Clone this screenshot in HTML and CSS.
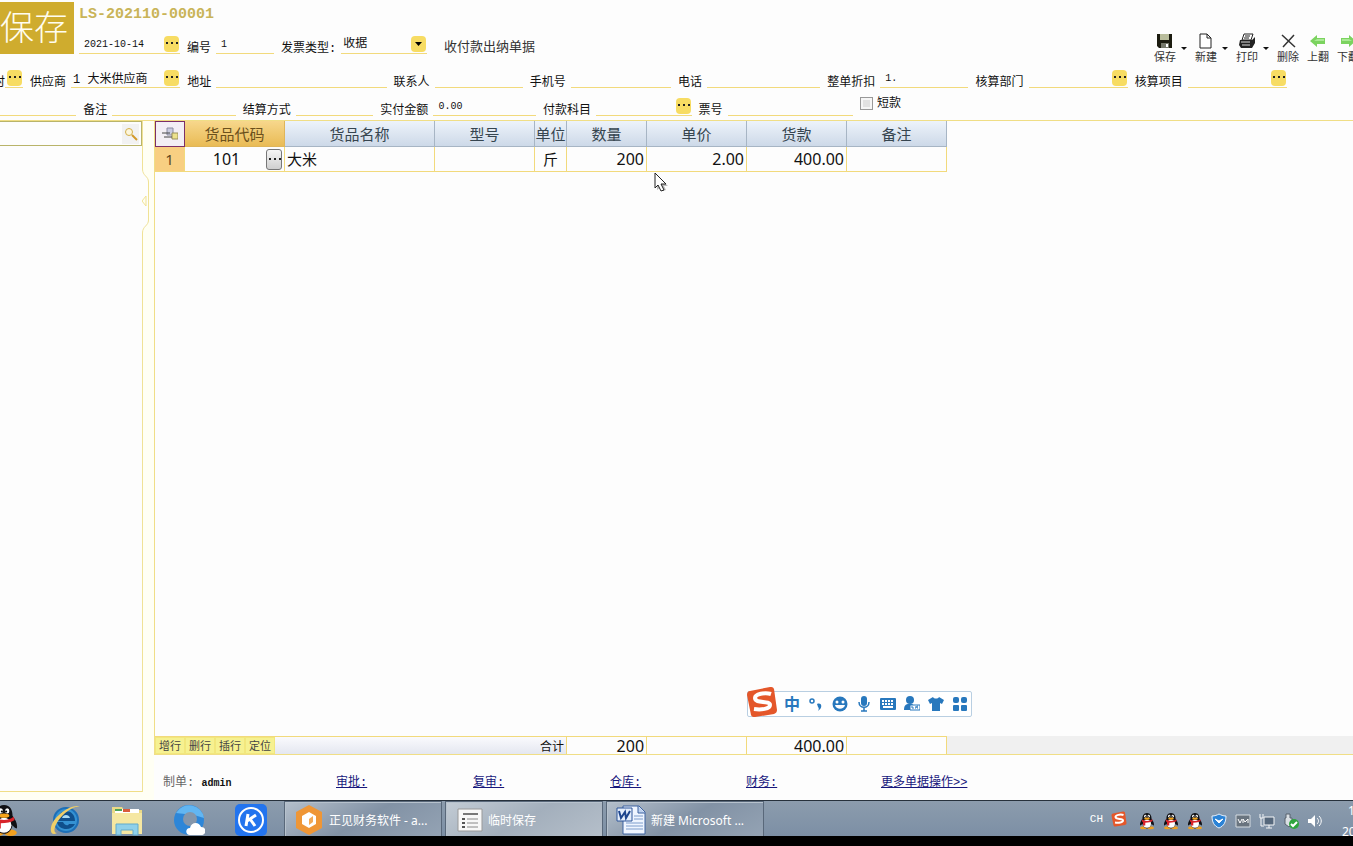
FILE: index.html
```html
<!DOCTYPE html>
<html lang="zh-CN">
<head>
    <meta charset="UTF-8">
    <meta name="viewport" content="width=device-width, initial-scale=1.0">
    <title>正见财务软件</title>
    <link rel="stylesheet" href="styles.css">
</head>
<body>
    <!-- shared shapes -->
    <svg class="defs" aria-hidden="true">
        <symbol id="more" viewBox="0 0 13 3">
            <path d="M1 0h2v2H1zM6 0h2v2H6zM11 0h2v2h-2z" fill="#222"/>
        </symbol>
        <symbol id="penguin" viewBox="0 0 28 30">
            <ellipse cx="8" cy="27" rx="6" ry="3" fill="#f0a020"/>
            <ellipse cx="20" cy="27" rx="6" ry="3" fill="#f0a020"/>
            <path d="M14 1C8 1 6 6 6 11c-3 4-5 8-4 12 2 0 3-2 4-3 1 5 4 8 8 8s7-3 8-8c1 1 2 3 4 3 1-4-1-8-4-12 0-5-2-10-8-10z" fill="#101014"/>
            <ellipse cx="14" cy="20" rx="7" ry="7" fill="#fff"/>
            <ellipse cx="11" cy="6.500" rx="2" ry="2.500" fill="#fff"/>
            <ellipse cx="17" cy="6.500" rx="2" ry="2.500" fill="#fff"/>
            <circle cx="12" cy="7" r="1"/><circle cx="16" cy="7" r="1"/>
            <ellipse cx="14" cy="11" rx="5" ry="2" fill="#f5a31a"/>
            <path d="M5 12c5 4 13 4 18 0l1 3c-3 2-8 3-13 3v5H7v-6c-2-1-2-2-2-5z" fill="#d8232a"/>
        </symbol>
        <symbol id="sogou" viewBox="0 0 32 32">
            <path d="M4 5 24 1c2 0 3 0 4 2l3 21c0 2-1 3-3 4L9 31c-2 0-3 0-4-2L1 9c0-2 1-4 3-4z" fill="#e4572a"/>
            <path d="M25 8c-6-2-16 0-16 4 0 6 15 2 15 7 0 4-9 5-16 4" fill="none" stroke="#fff" stroke-width="4"/>
        </symbol>
    </svg>

    <header class="bill-head">
        <div class="head-top">
            <button class="save-big" type="button">保存</button>
            <div class="head-main">
                <h1 class="bill-no">LS-202110-00001</h1>
                <div class="row row-date">
                    <div class="picker">
                        <input type="text" value="2021-10-14" aria-label="日期">
                        <button class="dots" type="button" aria-label="选择日期"><svg width="13" height="3"><use href="#more"/></svg></button>
                    </div>
                    <div class="field">
                        <label for="code">编号</label>
                        <div class="picker"><input id="code" type="text" value="1"></div>
                    </div>
                    <div class="field">
                        <label for="invoice">发票类型:</label>
                        <div class="picker">
                            <select id="invoice"><option>收据</option></select>
                            <span class="dots"><svg width="7" height="4" viewBox="0 0 7 4"><path d="M0 0h7L3.500 4z"/></svg></span>
                        </div>
                    </div>
                    <span class="bill-kind">收付款出纳单据</span>
                </div>
            </div>
            <nav class="toolbar">
                <div class="split">
                    <button class="tool" type="button">
                        <svg width="18" height="18" viewBox="0 0 18 18"><path d="M1 2h15v14H3l-2-2z" fill="#1c1c10"/><path d="M4 2h9v6H4z" fill="#b9bd9c"/><path d="M5 11h8v5H5z" fill="#75786a"/><path d="M10 12h2v3h-2z" fill="#fff"/></svg>
                        <span>保存</span>
                    </button>
                    <span class="caret"></span>
                </div>
                <div class="split">
                    <button class="tool" type="button">
                        <svg width="18" height="18" viewBox="0 0 18 18"><path d="M3 2h7l4 4v10H3zM10 2v4h4" fill="#fff" stroke="#222" stroke-width="1"/></svg>
                        <span>新建</span>
                    </button>
                    <span class="caret"></span>
                </div>
                <div class="split">
                    <button class="tool" type="button">
                        <svg width="18" height="18" viewBox="0 0 18 18"><path d="M6 2h9l-2 6H4z" fill="#fff" stroke="#222"/><path d="M7 4h5M6 6h5" stroke="#222"/><path d="M2 8h12l3-3v6l-3 5H3l-2-3z" fill="#222"/><path d="M3 10h9M4 13h8" stroke="#ddd"/></svg>
                        <span>打印</span>
                    </button>
                    <span class="caret"></span>
                </div>
                <button class="tool" type="button">
                    <svg width="18" height="18" viewBox="0 0 18 18"><path d="M3 3l13 12M15 3L4 15" fill="none" stroke="#333" stroke-width="1.500"/></svg>
                    <span>删除</span>
                </button>
                <button class="tool" type="button">
                    <svg width="18" height="18" viewBox="0 0 18 18"><path d="M1 9l7-6v3h8v6H8v3z" fill="#7bd35f"/><path d="M8 7h7v2H5z" fill="#a9e994"/></svg>
                    <span>上翻</span>
                </button>
                <button class="tool" type="button">
                    <svg width="18" height="18" viewBox="0 0 18 18"><path d="M17 9l-7-6v3H2v6h8v3z" fill="#7bd35f"/><path d="M3 7h7l3 2H3z" fill="#a9e994"/></svg>
                    <span>下翻</span>
                </button>
            </nav>
        </div>

        <div class="row row-supplier">
            <div class="field cut">
                <label for="time">时</label>
                <div class="picker"><input id="time" type="text"><button class="dots" type="button" aria-label="选择时间"><svg width="13" height="3"><use href="#more"/></svg></button></div>
            </div>
            <div class="field">
                <label for="supplier">供应商</label>
                <div class="picker"><input id="supplier" class="cn" type="text" value="1 大米供应商"><button class="dots" type="button" aria-label="选择供应商"><svg width="13" height="3"><use href="#more"/></svg></button></div>
            </div>
            <div class="field">
                <label for="address">地址</label>
                <div class="picker"><input id="address" type="text"></div>
            </div>
            <div class="field">
                <label for="contact">联系人</label>
                <div class="picker"><input id="contact" type="text"></div>
            </div>
            <div class="field">
                <label for="mobile">手机号</label>
                <div class="picker"><input id="mobile" type="text"></div>
            </div>
            <div class="field">
                <label for="phone">电话</label>
                <div class="picker"><input id="phone" type="text"></div>
            </div>
            <div class="field">
                <label for="discount">整单折扣</label>
                <div class="picker"><input id="discount" type="text" value="1."></div>
            </div>
            <div class="field">
                <label for="dept">核算部门</label>
                <div class="picker"><input id="dept" type="text"><button class="dots" type="button" aria-label="选择部门"><svg width="13" height="3"><use href="#more"/></svg></button></div>
            </div>
            <div class="field">
                <label for="project">核算项目</label>
                <div class="picker"><input id="project" type="text"><button class="dots" type="button" aria-label="选择项目"><svg width="13" height="3"><use href="#more"/></svg></button></div>
            </div>
        </div>

        <div class="row row-pay">
            <div class="picker"><input type="text" aria-label="其他"></div>
            <div class="field">
                <label for="remark">备注</label>
                <div class="picker"><input id="remark" type="text"></div>
            </div>
            <div class="field">
                <label for="settle">结算方式</label>
                <div class="picker"><input id="settle" type="text"></div>
            </div>
            <div class="field">
                <label for="paid">实付金额</label>
                <div class="picker"><input id="paid" type="text" value="0.00"></div>
            </div>
            <div class="field">
                <label for="subject">付款科目</label>
                <div class="picker"><input id="subject" type="text"><button class="dots" type="button" aria-label="选择科目"><svg width="13" height="3"><use href="#more"/></svg></button></div>
            </div>
            <div class="field">
                <label for="ticket">票号</label>
                <div class="picker"><input id="ticket" type="text"></div>
            </div>
            <label class="check"><input type="checkbox">短款</label>
        </div>
    </header>

    <main class="work">
        <aside class="side">
            <div class="search">
                <input type="text" aria-label="搜索">
                <button type="button" aria-label="查找">
                    <svg width="14" height="14" viewBox="0 0 14 14"><circle cx="5" cy="5" r="3.500" fill="#fdf6dc" stroke="#d3b04a"/><path d="M8 8l5 5" stroke="#d39a2a" stroke-width="2"/></svg>
                </button>
            </div>
        </aside>
        <div class="splitter">
            <div class="line line-top"></div>
            <svg width="12" height="64" viewBox="0 0 12 64"><path d="M0 0h1c0 7 6 7 6 13v38c0 6-6 6-6 13H0z" fill="#fdfdfd"/><path d="M.5 0c0 7 6 7 6 13v38c0 6-6 6-6 13" fill="none" stroke="#f0e296"/><path d="M4 27l-4 5 4 5z" fill="#fffef0" stroke="#f0e296"/></svg>
            <div class="line line-bottom"></div>
        </div>
        <section class="content">
            <div class="sheet">
                <table class="grid">
                    <colgroup>
                        <col class="w-no"><col class="w-std"><col class="w-name"><col class="w-std"><col class="w-unit"><col class="w-qty"><col class="w-std"><col class="w-std"><col class="w-std">
                    </colgroup>
                    <thead>
                        <tr>
                            <th class="corner"><svg width="16" height="14" viewBox="0 0 16 14"><path d="M5 1h6v7H5z" fill="#c9cbe0" stroke="#8a8ca0"/><path d="M10 6h6v6h-6z" fill="#ece28c" stroke="#99905a"/><path d="M0 6h8M2 10h8" stroke="#444"/></svg></th>
                            <th class="active">货品代码</th>
                            <th>货品名称</th>
                            <th>型号</th>
                            <th>单位</th>
                            <th>数量</th>
                            <th>单价</th>
                            <th>货款</th>
                            <th>备注</th>
                        </tr>
                    </thead>
                    <tbody>
                        <tr>
                            <td class="row-no">1</td>
                            <td><div class="code-cell"><span>101</span><button type="button" aria-label="选择货品"><svg width="13" height="3"><use href="#more"/></svg></button></div></td>
                            <td class="text">大米</td>
                            <td></td>
                            <td class="text unit">斤</td>
                            <td class="num">200</td>
                            <td class="num">2.00</td>
                            <td class="num">400.00</td>
                            <td></td>
                        </tr>
                    </tbody>
                </table>
            </div>
            <div class="total">
                <table class="grid">
                    <colgroup>
                        <col class="w-no"><col class="w-std"><col class="w-name"><col class="w-std"><col class="w-unit"><col class="w-qty"><col class="w-std"><col class="w-std"><col class="w-std">
                    </colgroup>
                    <tbody>
                        <tr>
                            <td class="ops" colspan="5">
                                <div class="ops-row">
                                    <button type="button">增行</button>
                                    <button type="button">删行</button>
                                    <button type="button">插行</button>
                                    <button type="button">定位</button>
                                    <span>合计</span>
                                </div>
                            </td>
                            <td class="num">200</td>
                            <td></td>
                            <td class="num">400.00</td>
                            <td></td>
                        </tr>
                    </tbody>
                </table>
            </div>
            <div class="sign">
                <span class="maker">制单: <b>admin</b></span>
                <a href="#">审批:</a>
                <a href="#">复审:</a>
                <a href="#">仓库:</a>
                <a href="#">财务:</a>
                <a href="#">更多单据操作&gt;&gt;</a>
            </div>
        </section>
    </main>

    <footer class="taskbar">
        <div class="launch">
            <svg width="30" height="32" viewBox="0 0 28 30"><use href="#penguin"/></svg>
            <svg width="32" height="32" viewBox="0 0 32 32"><circle cx="17" cy="16" r="13" fill="#1c6fb8"/><circle cx="17" cy="16" r="11" fill="#3592d3"/><path d="M8 17h18c0-13-17-13-18 0zM26 20c-4 8-17 6-18-2h6c2 4 5 4 6 2z" fill="#0f4f8c"/><path d="M13 14h8c-1-4-7-4-8 0z" fill="#a9dcf5"/><path d="M31 3C25-1 8 9 3 20c-3 8 0 12 5 9-4 0-3-6 1-12C15 8 26 1 31 3z" fill="#efce68"/></svg>
            <svg width="32" height="32" viewBox="0 0 32 32"><path d="M1 3h10l2 3h18v24H1z" fill="#ead987"/><path d="M4 5h24v6H4z" fill="#fff"/><path d="M12 5h7v3h-7z" fill="#d95b3c"/><path d="M4 5h7v2H4z" fill="#4da355"/><path d="M1 9h30v21H1z" fill="#f5e7a2"/><path d="M5 20h22v11h-5v-5H10v5H5z" fill="#8fd0ea" stroke="#62aacb"/></svg>
            <svg width="32" height="32" viewBox="0 0 32 32"><circle cx="16" cy="16" r="15" fill="#2d86d8"/><path d="M3 9A15 15 0 0 1 31 14L21 11z" fill="#62b6f2"/><circle cx="17" cy="15" r="7" fill="#8496ab"/><path d="M17 31c-5 0-5-7 0-7 1-6 9-7 11-1 6 0 6 8 0 8z" fill="#fff"/></svg>
            <svg width="32" height="32" viewBox="0 0 32 32"><rect width="32" height="32" rx="5" fill="#2374ee"/><circle cx="16" cy="16" r="12" fill="none" stroke="#fff" stroke-width="2"/><path d="M13 10l-2 12M21 11l-9 6M15 15l5 7" fill="none" stroke="#fff" stroke-width="3"/></svg>
        </div>
        <div class="tasks">
            <button class="task" type="button">
                <svg width="30" height="30" viewBox="0 0 30 30"><path d="M15 0l13 7v16l-13 7L2 23V7z" fill="#ef9636"/><path d="M15 7l7 4v8l-7 4-7-4v-8z" fill="#fff"/><path d="M15 14l4-3v6l-4 3z" fill="#f2aa58"/></svg>
                <span>正见财务软件 - a...</span>
            </button>
            <button class="task current" type="button">
                <svg width="26" height="26" viewBox="0 0 26 26"><path d="M1 2h24v22H1z" fill="#f7f7f7" stroke="#999"/><path d="M6 7h15" stroke="#777" stroke-width="2"/><path d="M10 12h11M10 16h11M10 20h11" stroke="#888"/><path d="M5 12h3M5 16h3M5 20h3" stroke="#555" stroke-width="2"/></svg>
                <span>临时保存</span>
            </button>
            <button class="task" type="button">
                <svg width="30" height="30" viewBox="0 0 30 30"><path d="M7 1h16l6 6v22H7z" fill="#eff5ff" stroke="#3d62a0"/><path d="M22 1v7h7" fill="#bcd0ee" stroke="#3d62a0"/><path d="M18 11h9M18 14h9M10 18h17M10 21h17M10 24h17" stroke="#7d9ccb"/><path d="M1 3h15v13H1z" fill="#e3edfb" stroke="#2c5499"/><path d="M3 6l2 7 4-6 1 6 4-7" fill="none" stroke="#1d458e" stroke-width="2"/></svg>
                <span>新建 Microsoft ...</span>
            </button>
        </div>
        <div class="tray">
            <span class="lang">CH</span>
            <svg class="raised" width="16" height="16" viewBox="0 0 32 32"><use href="#sogou"/></svg>
            <svg width="16" height="18" viewBox="0 0 28 30"><use href="#penguin"/></svg>
            <svg width="16" height="18" viewBox="0 0 28 30"><use href="#penguin"/></svg>
            <svg width="16" height="18" viewBox="0 0 28 30"><use href="#penguin"/></svg>
            <svg width="16" height="16" viewBox="0 0 16 16"><path d="M1 3c3 0 5-1 7-2 2 1 4 2 7 2 0 6-2 10-7 12C3 13 1 9 1 3z" fill="#2b83d6" stroke="#e8f3ff"/><path d="M4 6l4 4 4-4-4 2z" fill="#fff" stroke="#fff"/></svg>
            <svg width="16" height="16" viewBox="0 0 16 16"><path d="M1 2h14v12H1z" fill="#69747f" stroke="#d5dbe1"/><path d="M3 6l2 4 2-4M8 10V6l2 3 3-3v4" fill="none" stroke="#fff"/></svg>
            <svg width="16" height="16" viewBox="0 0 16 16"><path d="M5 4h10v8H5zM7 15h6M10 12v3" fill="#56687c" stroke="#f4f6f8"/><path d="M1 1v4h3V1M2 5v8h3" fill="none" stroke="#f4f6f8"/></svg>
            <svg width="16" height="16" viewBox="0 0 16 16"><path d="M3 1h4v4h2v6l-3 3-4-3V5h1z" fill="#d9dee3" stroke="#58636e"/><circle cx="11" cy="11" r="5" fill="#2fa53d"/><path d="M8 11l2 2 4-4" fill="none" stroke="#fff" stroke-width="2"/></svg>
            <svg width="16" height="16" viewBox="0 0 16 16"><path d="M1 6h3l4-4v12l-4-4H1z" fill="#fff"/><path d="M10 5c2 2 2 4 0 6M12 3c3 3 3 7 0 10" fill="none" stroke="#fff"/></svg>
            <div class="clock"><span class="hour">17:08</span><span>2021/10/14</span></div>
        </div>
    </footer>

    <div class="ime">
        <svg class="ime-logo" width="32" height="32" viewBox="0 0 32 32"><use href="#sogou"/></svg>
        <b>中</b>
        <svg width="16" height="16" viewBox="0 0 16 16"><circle cx="4" cy="5" r="2" fill="none" stroke="#2878bd" stroke-width="1.500"/><path d="M9 8c5-2 6 4 1 7 1-2 1-3 0-4z" fill="#2878bd"/></svg>
        <svg width="16" height="16" viewBox="0 0 16 16"><circle cx="8" cy="8" r="7.500" fill="#2878bd"/><circle cx="5" cy="6" r="1.500" fill="#fff"/><circle cx="11" cy="6" r="1.500" fill="#fff"/><path d="M3 9h10c-1 5-9 5-10 0z" fill="#fff"/></svg>
        <svg width="16" height="16" viewBox="0 0 16 16"><rect x="5" y="0" width="6" height="10" rx="3" fill="#2878bd"/><path d="M3 6c0 7 10 7 10 0M8 12v3M5 15h6" fill="none" stroke="#2878bd" stroke-width="1.500"/></svg>
        <svg width="16" height="16" viewBox="0 0 16 16"><rect x="0" y="2" width="16" height="12" rx="1" fill="#2878bd"/><path d="M2 5h12M2 8h12" stroke="#fff" stroke-width="2" stroke-dasharray="2 1"/><path d="M3 11h10" stroke="#fff" stroke-width="2"/></svg>
        <svg width="16" height="16" viewBox="0 0 16 16"><circle cx="6" cy="4" r="4" fill="#2878bd"/><path d="M0 14c0-6 3-6 6-6s4 0 4 6z" fill="#2878bd"/><path d="M6 9h10v5H6z" fill="#fff" stroke="#2878bd"/><path d="M8 10v2h2M11 12h1v-2M14 10h-1v2h1" fill="none" stroke="#2878bd"/></svg>
        <svg width="16" height="16" viewBox="0 0 16 16"><path d="M5 1c1 2 5 2 6 0l5 3-2 4-2-1v8H4V7L2 8 0 4z" fill="#2878bd"/></svg>
        <svg width="16" height="16" viewBox="0 0 16 16"><g fill="#2878bd"><rect x="1" y="1" width="6" height="6" rx="2"/><rect x="9" y="1" width="6" height="6" rx="2"/><rect x="1" y="9" width="6" height="6" rx="1"/><rect x="9" y="9" width="6" height="6" rx="1"/></g></svg>
    </div>

    <svg class="cursor" width="14" height="20" viewBox="0 0 14 20"><path d="M3 3v15l4-3 2 4 3-1-2-4h4z" fill="#bbb"/><path d="M1 1v15l3-3 3 6 3-1-3-6h5z" fill="#fff" stroke="#222"/></svg>
</body>
</html>
```

FILE: styles.css
```css
* {
    box-sizing: border-box;
}

body {
    margin: 0;
    height: 100vh;
    display: flex;
    flex-direction: column;
    position: relative;
    overflow: hidden;
    background-color: #fdfdfd;
    font-family: "Noto Sans", "Noto Sans CJK SC", sans-serif;
    font-size: 12px;
    color: #111;
}

button, input, select {
    font-family: inherit;
    font-size: inherit;
    color: inherit;
    border: none;
    border-radius: 0;
    background: none;
    padding: 0;
    margin: 0;
}

svg {
    display: block;
    flex: none;
}

.defs {
    position: absolute;
    width: 0;
    height: 0;
}

/* header form */
.bill-head {
    flex: none;
    padding-bottom: 4px;
    border-bottom: 1px solid #f0de86;
}

.head-top {
    display: flex;
    align-items: flex-start;
    height: 66px;
}

.save-big {
    width: 74px;
    height: 52px;
    margin-top: 2px;
    padding: 0 6px 6px 0;
    flex: none;
    display: flex;
    justify-content: center;
    align-items: center;
    background-color: #cfac2e;
    color: #fffdf0;
    font-family: "Liberation Serif", "Noto Sans CJK SC", serif;
    font-size: 34px;
    font-weight: 300;
    white-space: nowrap;
}

.head-main {
    flex: 1;
    min-width: 0;
    padding: 6px 0 0 5px;
}

.bill-no {
    margin: 0;
    font-family: "Liberation Mono", monospace;
    font-size: 15px;
    line-height: 18px;
    color: #c9b458;
}

.row {
    display: grid;
    align-items: end;
    column-gap: 7px;
}

.row-date {
    height: 30px;
    grid-template-columns: 101fr 87fr 146fr 720fr;
}

.row-supplier {
    height: 22px;
    padding-right: 66px;
    grid-template-columns: 23px 150fr 199fr 129fr 141fr 142fr 141fr 152fr 152fr;
}

.row-pay {
    height: 28px;
    grid-template-columns: 76fr 152fr 130fr 155fr 148fr 154fr 491fr;
}

.field {
    display: flex;
    align-items: flex-end;
    gap: 5px;
    min-width: 0;
}

.field label {
    flex: none;
    line-height: 10px;
    font-family: "Liberation Mono", "Noto Sans CJK SC", sans-serif;
}

.cut {
    justify-content: flex-end;
    overflow: hidden;
    gap: 0;
}

.cut .picker {
    flex: none;
    width: 18px;
}

.picker {
    flex: 1;
    min-width: 0;
    display: flex;
    align-items: center;
    height: 20px;
    padding-right: 1px;
    border-bottom: 1px solid #f2da7c;
}

.picker input, .picker select {
    flex: 1;
    min-width: 0;
    width: 0;
    height: 19px;
    padding: 1px 0 0 5px;
    font-family: "Liberation Mono", "Noto Sans CJK SC", monospace;
    font-size: 10px;
    appearance: none;
}

.picker select, .picker .cn {
    padding-left: 2px;
    font-size: 12px;
}

.picker .cn {
    padding-top: 0;
}

.cut .picker input {
    padding: 0;
}

.dots {
    flex: none;
    display: flex;
    align-items: center;
    justify-content: center;
    width: 15px;
    height: 16px;
    border-radius: 4px;
    background-color: #f7dc63;
}

.bill-kind {
    padding-left: 10px;
    font-size: 13px;
    line-height: 16px;
    color: #333;
}

.check {
    display: flex;
    align-items: center;
    gap: 4px;
    height: 26px;
    line-height: 14px;
}

.check input {
    appearance: none;
    width: 13px;
    height: 13px;
    border: 1px solid #999;
    background-color: #e2e2e2;
    box-shadow: inset 0 0 0 2px #f6f6f6;
}

/* toolbar */
.toolbar {
    flex: none;
    display: flex;
    gap: 8px;
    margin: 32px -6px 0 0;
}

.tool {
    width: 22px;
    display: flex;
    flex-direction: column;
    align-items: center;
    font-size: 11px;
    line-height: 14px;
    color: #333;
    white-space: nowrap;
}

.split {
    display: flex;
    align-items: center;
    gap: 5px;
}

.caret {
    border: 3px solid transparent;
    border-top-color: #111;
    border-bottom: none;
}

/* work area */
.work {
    flex: 1;
    min-height: 0;
    display: flex;
    background-color: #fffff4;
}

.side {
    width: 142px;
    flex: none;
    margin-bottom: 8px;
    background-color: #fdfdfd;
    border-bottom: 1px solid #f0de86;
}

.search {
    display: flex;
    align-items: center;
    height: 25px;
    padding-right: 2px;
    border: 1px solid #b9b46a;
    border-left: none;
}

.search input {
    flex: 1;
    min-width: 0;
    height: 23px;
}

.search button {
    width: 17px;
    height: 20px;
    display: flex;
    align-items: center;
    justify-content: center;
    background-color: #f2f2f2;
}

.splitter {
    width: 12px;
    flex: none;
    display: flex;
    flex-direction: column;
    margin-bottom: 8px;
}

.line {
    border-left: 1px solid #f0e296;
}

.line-top {
    height: 48px;
}

.line-bottom {
    flex: 1;
}

.content {
    flex: 1;
    min-width: 0;
    display: flex;
    flex-direction: column;
    background-color: #fdfdfd;
}

.sheet {
    flex: 1;
    border-left: 1px solid #f0de86;
}

.grid {
    table-layout: fixed;
    width: 792px;
    border-collapse: separate;
    border-spacing: 0;
    font-size: 15px;
}

.w-no {
    width: 30px;
}

.w-std {
    width: 100px;
}

.w-name {
    width: 150px;
}

.w-unit {
    width: 32px;
}

.w-qty {
    width: 80px;
}

.grid th {
    height: 26px;
    padding: 0;
    font-weight: normal;
    line-height: 20px;
    color: #36454f;
    background: linear-gradient(#edf3fa, #cdd9e8);
    border-right: 1px solid #a7b5c4;
    border-bottom: 1px solid #a7b5c4;
}

.grid th.active {
    background: linear-gradient(#f7d78c, #e9bb55);
    border-color: #dfb55a;
    color: #6b501c;
}

.grid th.corner {
    background: #f3eff5;
    border: 1px solid #7c2f68;
}

.corner svg {
    margin: 0 auto;
}

.grid td {
    height: 25px;
    padding: 0 2px;
    line-height: 20px;
    border-right: 1px solid #f2da7c;
    border-bottom: 1px solid #f2da7c;
}

.grid td.row-no {
    text-align: center;
    background-color: #f8cf82;
    color: #5d4820;
}

.grid .num {
    text-align: right;
    font-size: 16px;
}

.grid .unit {
    text-align: center;
}

.code-cell {
    display: flex;
    align-items: center;
    height: 22px;
}

.code-cell span {
    flex: 1;
    text-align: center;
    font-size: 16px;
}

.code-cell button {
    width: 16px;
    height: 21px;
    display: flex;
    align-items: center;
    justify-content: center;
    border: 1px solid #777;
    border-radius: 3px;
    background: linear-gradient(#f6f6f6, #cfcfcf);
}

/* totals */
.total {
    flex: none;
    background-color: #f0f0f0;
    border-left: 1px solid #f0de86;
    border-bottom: 1px solid #f0de86;
}

.total .grid {
    background-color: #fdfdfd;
}

.total .grid td {
    height: 18px;
    line-height: 16px;
    border-top: 1px solid #f2da7c;
    border-bottom: none;
}

.total .grid td.ops {
    padding: 0 2px 0 0;
    background: linear-gradient(#fafafd, #e4e7f0);
}

.ops-row {
    display: flex;
    align-items: center;
    font-size: 12px;
}

.ops-row button {
    width: 30px;
    height: 17px;
    background-color: #f6f191;
    border: 1px solid #f2e77d;
    font-size: 11px;
    line-height: 14px;
    color: #444;
}

.ops-row span {
    margin-left: auto;
    padding-top: 2px;
    line-height: 15px;
}

.sign {
    flex: none;
    height: 45px;
    padding: 19px 0 0 9px;
    display: grid;
    grid-template-columns: 173fr 137fr 137fr 136fr 135fr 472fr;
    align-items: start;
    line-height: 18px;
    font-family: "Liberation Mono", "Noto Sans CJK SC", monospace;
}

.sign a {
    color: #17177c;
    white-space: nowrap;
    justify-self: start;
}

.maker {
    color: #666;
}

.maker b {
    font-size: 10px;
    color: #111;
}

/* taskbar */
.taskbar {
    flex: none;
    height: 46px;
    display: flex;
    border-top: 1px solid #27313c;
    border-bottom: 10px solid #000;
    background: linear-gradient(#8c9cad, #7c8fa5);
    overflow: hidden;
}

.launch {
    width: 284px;
    flex: none;
    display: flex;
    gap: 30px;
    padding-top: 3px;
    margin-left: -11px;
}

.tasks {
    flex: 1;
    display: flex;
    gap: 3px;
    margin-left: 11px;
}

.task {
    width: 158px;
    height: 36px;
    display: flex;
    align-items: center;
    gap: 5px;
    padding-left: 9px;
    border: 1px solid #59687a;
    border-bottom: none;
    background: linear-gradient(150deg, #b4bfcb, #8292a5 50%, #94a3b4);
    box-shadow: inset 1px 1px 0 #b7c2cd;
    color: #fff;
    white-space: nowrap;
}

.task.current {
    padding-left: 11px;
    background: linear-gradient(150deg, #c3ccd5, #a3afbc 50%, #b5bfca);
}

.tray {
    flex: none;
    display: flex;
    align-items: center;
    gap: 8px;
    padding-top: 5px;
    color: #fff;
}

.lang {
    font-family: "Liberation Mono", monospace;
    font-size: 11px;
    padding-bottom: 4px;
}

.tray .raised {
    margin: 0 4px 4px 0;
}

.clock {
    width: 30px;
    margin: 0 -19px 0 11px;
    display: flex;
    flex-direction: column;
    line-height: 21px;
    white-space: nowrap;
}

.hour {
    padding-left: 6px;
}

/* input method bar floating over the sheet */
.ime {
    position: absolute;
    right: 381px;
    bottom: 129px;
    height: 26px;
    display: flex;
    align-items: center;
    gap: 8px;
    padding-right: 3px;
    background-color: #fff;
    border: 1px solid #b9cfe2;
    border-radius: 2px;
    color: #2878bd;
}

.ime b {
    font-size: 16px;
    line-height: 20px;
}

.ime-logo {
    margin: 0 -2px 4px -2px;
}

.cursor {
    position: absolute;
    left: 654px;
    top: 172px;
}
```
